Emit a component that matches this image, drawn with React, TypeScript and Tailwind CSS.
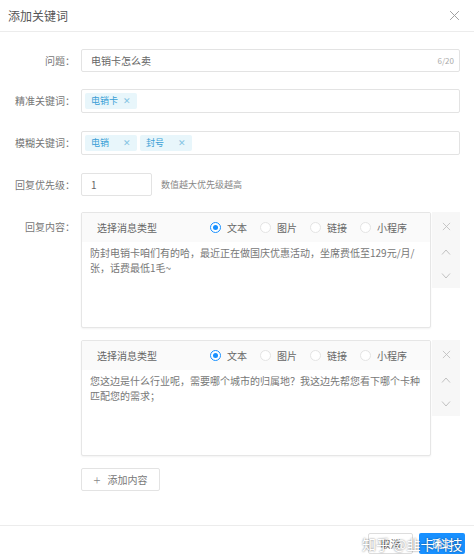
import { useState } from 'react'

const FONT = '[font-family:"Noto_Sans_CJK_SC","Noto_Sans",sans-serif]'

const Label = ({ text, tall }: { text: string; tall?: boolean }) => (
  <div className={`w-[81px] shrink-0 pr-[6px] text-right text-[10px] text-[#777] ${tall ? 'leading-[29px]' : 'leading-[23px]'}`}>
    {text}：
  </div>
)

const Tag = ({ text }: { text: string }) => (
  <span className="flex h-[16px] w-[52px] items-center justify-between rounded-[2px] bg-[#e8f6fb] pl-[6px] pr-[6px] text-[9px] text-[#3a9fd6]">
    <span>{text}</span>
    <span className="text-[9px] text-[#84c4e3]">✕</span>
  </span>
)

const Radio = ({ label, checked }: { label: string; checked?: boolean }) => (
  <span className="flex items-center gap-[6px]">
    <span
      className={
        checked
          ? 'flex h-[11px] w-[11px] items-center justify-center rounded-full border border-[#1890ff] bg-white'
          : 'h-[11px] w-[11px] rounded-full border border-[#e4e4e4] bg-white'
      }
    >
      {checked && <span className="h-[5px] w-[5px] rounded-full bg-[#1890ff]" />}
    </span>
    <span className="text-[10px] text-[#666]">{label}</span>
  </span>
)

const Chevron = ({ up }: { up?: boolean }) => (
  <svg width="10" height="6" viewBox="0 0 10 6" fill="none" stroke="#bbb" strokeWidth="0.9">
    {up ? <path d="M1 5.5 5 1l4 4.5" /> : <path d="M1 .5 5 5l4-4.5" />}
  </svg>
)

const Cross = ({ size = 9, color = '#bbb' }: { size?: number; color?: string }) => (
  <svg width={size} height={size} viewBox="0 0 10 10" fill="none" stroke={color} strokeWidth="0.9">
    <path d="M1 1l8 8M9 1 1 9" />
  </svg>
)

const ReplyCard = ({ text }: { text: string }) => (
  <div className="flex gap-[1px]">
    <div className="h-[116px] w-[350px] overflow-hidden rounded-[2px] border border-[#e6e6e6] bg-white shadow-[0_1px_2px_rgba(0,0,0,0.05)]">
      <div className="flex h-[29px] items-center bg-[#fafafa] pl-[15px]">
        <span className="w-[113px] text-[10px] text-[#666]">选择消息类型</span>
        <div className="flex items-center gap-[13px]">
          <Radio label="文本" checked />
          <Radio label="图片" />
          <Radio label="链接" />
          <Radio label="小程序" />
        </div>
      </div>
      <p className="px-[8px] pt-[3px] text-[10px] leading-[15px] text-[#777]">{text}</p>
    </div>
    <div className="flex h-[76px] w-[28px] flex-col items-center gap-[18px] bg-[#f7f7f7] pt-[10px]">
      <Cross />
      <Chevron up />
      <Chevron />
    </div>
  </div>
)

export default function App() {
  const [question] = useState('电销卡怎么卖')

  return (
    <div className={`relative h-[560px] w-[474px] overflow-hidden bg-white ${FONT}`}>
      <div className="flex h-[32px] items-center justify-between border-b border-[#ececec] pl-[8px] pr-[14px]">
        <span className="text-[12px] text-[#555]">添加关键词</span>
        <Cross size={11} color="#a0a0a0" />
      </div>

      <div className="flex flex-col pt-[17px]">
        <div className="flex">
          <Label text="问题" />
          <div className="flex h-[23px] w-[379px] items-center justify-between rounded-[2px] border border-[#e3e3e3] pl-[9px] pr-[5px]">
            <span className="text-[10px] text-[#666]">{question}</span>
            <span className="text-[8px] text-[#aaa]">6/20</span>
          </div>
        </div>

        <div className="mt-[17px] flex">
          <Label text="精准关键词" />
          <div className="flex h-[24px] w-[379px] items-center gap-[3px] rounded-[2px] border border-[#e3e3e3] pl-[3px]">
            <Tag text="电销卡" />
          </div>
        </div>

        <div className="mt-[18px] flex">
          <Label text="模糊关键词" />
          <div className="flex h-[24px] w-[379px] items-center gap-[3px] rounded-[2px] border border-[#e3e3e3] pl-[3px]">
            <Tag text="电销" />
            <Tag text="封号" />
          </div>
        </div>

        <div className="mt-[18px] flex items-center">
          <Label text="回复优先级" />
          <div className="flex h-[23px] w-[71px] items-center rounded-[2px] border border-[#e3e3e3] pl-[9px] text-[10px] text-[#666]">1</div>
          <span className="ml-[9px] text-[9px] text-[#888]">数值越大优先级越高</span>
        </div>

        <div className="mt-[16px] flex">
          <Label text="回复内容" tall />
          <div className="flex flex-col gap-[12px]">
            <ReplyCard text="防封电销卡咱们有的哈，最近正在做国庆优惠活动，坐席费低至129元/月/张，话费最低1毛~" />
            <ReplyCard text="您这边是什么行业呢，需要哪个城市的归属地？我这边先帮您看下哪个卡种匹配您的需求；" />
            <button className="flex h-[23px] w-[79px] items-center justify-center gap-[7px] rounded-[2px] border border-[#e3e3e3] bg-white text-[10px] text-[#777]">
              <span className="text-[13px] font-light leading-none text-[#888]">+</span>
              添加内容
            </button>
          </div>
        </div>
      </div>

      <div className="absolute bottom-0 left-0 right-0 flex h-[35px] items-start justify-end gap-[6px] border-t border-[#ececec] pr-[9px] pt-[7px]">
        <button className="h-[21px] w-[45px] rounded-[2px] border border-[#ddd] bg-white text-[10px] text-[#666]">取消</button>
        <button className="h-[21px] w-[46px] rounded-[2px] bg-[#1890ff] text-[10px] text-white">确定</button>
      </div>

      <div className="absolute left-[362px] top-[533px] whitespace-nowrap text-[14px] leading-[22px] text-white [text-shadow:0_0_2px_rgba(0,0,0,0.6)]">
        知乎 @韭卡科技
      </div>
    </div>
  )
}
